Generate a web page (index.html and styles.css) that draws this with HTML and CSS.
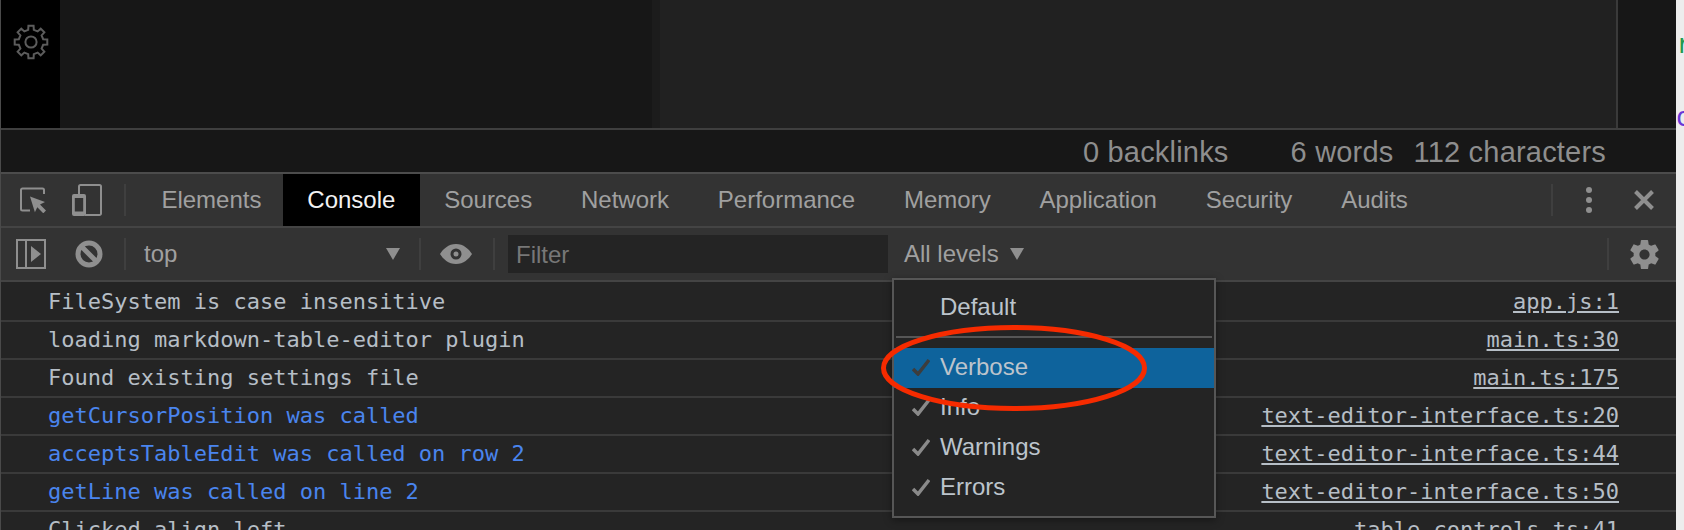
FILE: index.html
```html
<!DOCTYPE html>
<html lang="en">
<head>
<meta charset="utf-8">
<title>DevTools console</title>
<link rel="stylesheet" href="styles.css">
</head>
<body>
<div class="page">
  <main class="app">
    <section class="workspace">
      <aside class="ribbon">
        <svg class="ribbon-gear" viewBox="-18 -18 36 36" aria-hidden="true">
          <polygon points="12.18,-2.81 16.3,-2.58 16.3,2.58 12.18,2.81 10.6,6.63 13.35,9.7 9.7,13.35 6.63,10.6 2.81,12.18 2.58,16.3 -2.58,16.3 -2.81,12.18 -6.63,10.6 -9.7,13.35 -13.35,9.7 -10.6,6.63 -12.18,2.81 -16.3,2.58 -16.3,-2.58 -12.18,-2.81 -10.6,-6.63 -13.35,-9.7 -9.7,-13.35 -6.63,-10.6 -2.81,-12.18 -2.58,-16.3 2.58,-16.3 2.81,-12.18 6.63,-10.6 9.7,-13.35 13.35,-9.7 10.6,-6.63"/>
          <circle r="5.6"/>
        </svg>
      </aside>
      <div class="side-pane"></div>
      <div class="pane-split"></div>
      <div class="editor-pane"></div>
      <div class="right-pane"></div>
    </section>

    <footer class="statusbar">
      <span class="stat-links">0 backlinks</span>
      <span class="stat-words">6 words</span>
      <span>112 characters</span>
    </footer>

    <nav class="tabbar">
      <svg class="ic-inspect" viewBox="0 0 26 26" aria-hidden="true">
        <path class="line" d="M10 23.5H2.5a1.5 1.5 0 0 1-1.5-1.5V3a1.5 1.5 0 0 1 1.5-1.5h20A1.5 1.5 0 0 1 24 3v4"/>
        <path class="solid" d="M10 9.5l15 5.5-5 2.6 6 6-2.7 2.7-6-6-2.4 5z"/>
      </svg>
      <svg class="ic-device" viewBox="0 0 30 32" aria-hidden="true">
        <path class="line" d="M7 10V2.5A1.5 1.5 0 0 1 8.500 1h19A1.500 1.500 0 0 1 29 2.500v27a1.500 1.500 0 0 1-1.500 1.500H13"/>
        <path class="solid" d="M2 10h10a2 2 0 0 1 2 2v18a2 2 0 0 1-2 2H2a2 2 0 0 1-2-2V12a2 2 0 0 1 2-2zm.8 4v13.500h8.400V14z"/>
      </svg>
      <span class="sep sep-tabs"></span>
      <div class="tabs">
        <span class="tab">Elements</span>
        <span class="tab tab-active">Console</span>
        <span class="tab">Sources</span>
        <span class="tab">Network</span>
        <span class="tab">Performance</span>
        <span class="tab">Memory</span>
        <span class="tab">Application</span>
        <span class="tab">Security</span>
        <span class="tab">Audits</span>
      </div>
      <span class="sep sep-end"></span>
      <svg class="ic-kebab" viewBox="0 0 8 28" aria-hidden="true">
        <circle class="solid" cx="4" cy="4" r="3"/>
        <circle class="solid" cx="4" cy="14" r="3"/>
        <circle class="solid" cx="4" cy="24" r="3"/>
      </svg>
      <svg class="ic-close" viewBox="0 0 20 20" aria-hidden="true">
        <path class="cross" d="M1.500 1.500l17 17M18.500 1.500l-17 17"/>
      </svg>
    </nav>

    <div class="filterbar">
      <svg class="ic-sidebar" viewBox="0 0 30 30" aria-hidden="true">
        <path class="line" d="M1 1h28v28H1zM10 1v28"/>
        <path class="solid" d="M15 7l10 8-10 8z"/>
      </svg>
      <svg class="ic-block" viewBox="0 0 28 28" aria-hidden="true">
        <circle class="thick" cx="14" cy="14" r="11"/>
        <path class="thick" d="M6.500 6.500l15 15"/>
      </svg>
      <span class="sep sep-a"></span>
      <div class="context">
        <span>top</span>
        <span class="tri"></span>
      </div>
      <span class="sep"></span>
      <svg class="ic-eye" viewBox="0 0 32 20" aria-hidden="true">
        <path class="solid" fill-rule="evenodd" d="M16 0c7.500 0 13 5 16 10-3 5-8.500 10-16 10S3 15 0 10C3 5 8.500 0 16 0zm0 4.500a5.500 5.500 0 1 0 0 11 5.500 5.500 0 0 0 0-11zm0 3a2.500 2.500 0 1 1 0 5 2.500 2.500 0 0 1 0-5z"/>
      </svg>
      <span class="sep sep-b"></span>
      <div class="filter">Filter</div>
      <div class="levels">
        <span>All levels</span>
        <span class="tri"></span>
      </div>
      <span class="sep sep-gear"></span>
      <svg class="ic-gear" viewBox="2 2 20 20" aria-hidden="true">
        <path class="solid" d="M19.430 12.980c.04-.32.07-.64.07-.98s-.03-.66-.07-.98l2.110-1.650c.19-.15.24-.42.12-.64l-2-3.460c-.12-.22-.39-.3-.61-.22l-2.490 1c-.52-.4-1.080-.73-1.690-.98l-.38-2.650C14.460 2.180 14.250 2 14 2h-4c-.25 0-.46.18-.49.42l-.38 2.650c-.61.25-1.170.59-1.690.98l-2.490-1c-.23-.09-.49 0-.61.22l-2 3.460c-.13.22-.07.49.12.64l2.110 1.650c-.04.32-.07.65-.07.98s.03.66.07.98l-2.110 1.650c-.19.15-.24.42-.12.64l2 3.460c.12.22.39.3.61.22l2.490-1c.52.4 1.080.73 1.690.98l.38 2.650c.03.24.24.42.49.42h4c.25 0 .46-.18.49-.42l.38-2.650c.61-.25 1.170-.59 1.690-.98l2.490 1c.23.09.49 0 .61-.22l2-3.460c.12-.22.07-.49-.12-.64l-2.110-1.650zM12 15.500c-1.930 0-3.500-1.570-3.500-3.500s1.570-3.500 3.500-3.500 3.500 1.570 3.500 3.500-1.570 3.500-3.500 3.500z"/>
      </svg>
    </div>

    <section class="log">
      <div class="row"><span>FileSystem is case insensitive</span><a class="src">app.js:1</a></div>
      <div class="row"><span>loading markdown-table-editor plugin</span><a class="src">main.ts:30</a></div>
      <div class="row"><span>Found existing settings file</span><a class="src">main.ts:175</a></div>
      <div class="row row-verbose"><span>getCursorPosition was called</span><a class="src">text-editor-interface.ts:20</a></div>
      <div class="row row-verbose"><span>acceptsTableEdit was called on row 2</span><a class="src">text-editor-interface.ts:44</a></div>
      <div class="row row-verbose"><span>getLine was called on line 2</span><a class="src">text-editor-interface.ts:50</a></div>
      <div class="row"><span>Clicked align left</span><a class="src">table-controls.ts:41</a></div>
    </section>

    <div class="menu">
      <div class="item"><span class="check"></span>Default</div>
      <div class="menu-sep"></div>
      <div class="item item-on">
        <svg class="check check-dark" viewBox="0 0 18 18" aria-hidden="true"><path d="M1 11l5 5L17 2"/></svg>Verbose
      </div>
      <div class="item">
        <svg class="check" viewBox="0 0 18 18" aria-hidden="true"><path d="M1 11l5 5L17 2"/></svg>Info
      </div>
      <div class="item">
        <svg class="check" viewBox="0 0 18 18" aria-hidden="true"><path d="M1 11l5 5L17 2"/></svg>Warnings
      </div>
      <div class="item">
        <svg class="check" viewBox="0 0 18 18" aria-hidden="true"><path d="M1 11l5 5L17 2"/></svg>Errors
      </div>
    </div>

    <svg class="annotation" viewBox="0 0 268 88" aria-hidden="true">
      <ellipse cx="134" cy="44" rx="130.500" ry="40.500"/>
    </svg>
  </main>

  <div class="edge">
    <span class="edge-r">r</span>
    <span class="edge-o">o</span>
  </div>
</div>
</body>
</html>
```
FILE: styles.css
```css
* { box-sizing: border-box; }

html, body {
  margin: 0;
  height: 530px;
  overflow: hidden;
  background: #ededed;
  font-family: "Liberation Sans", Arial, sans-serif;
}

.page {
  display: flex;
  width: 1684px;
  height: 530px;
}

.app {
  position: relative;
  width: 1676px;
  height: 530px;
  display: flex;
  flex-direction: column;
  overflow: hidden;
  border-left: 1px solid #4a4a4a;
}

/* upper app */
.workspace {
  display: flex;
  height: 130px;
  border-bottom: 2px solid #3f3f3f;
  background: #171717;
}
.ribbon {
  width: 59px;
  background: #000;
  padding: 24px 0 0 12px;
}
.ribbon-gear { display: block; width: 36px; height: 36px; }
.ribbon-gear polygon,
.ribbon-gear circle { fill: none; stroke: #5c5c5c; stroke-width: 2; }
.side-pane { width: 592px; background: #171717; }
.pane-split { width: 8px; background: #1c1c1c; }
.editor-pane { width: 958px; background: #212121; border-right: 2px solid #3a3a3a; }
.right-pane { flex: 1; background: #171717; }

.statusbar {
  display: flex;
  align-items: center;
  justify-content: flex-end;
  height: 44px;
  padding: 3px 70px 0 0;
  border-bottom: 2px solid #4c4c4c;
  background: #171717;
  color: #8e8e8e;
  font-size: 29px;
  letter-spacing: 0.2px;
}
.stat-links { margin-right: 62px; }
.stat-words { margin-right: 20px; }

/* toolbars */
.tabbar, .filterbar {
  display: flex;
  align-items: center;
  height: 54px;
  background: #333;
  border-bottom: 2px solid #444;
  color: #a0a0a0;
  font-size: 24px;
}
.tabbar { padding-right: 22px; }
.filterbar { padding-right: 17px; }
.tabs { display: flex; align-self: stretch; flex: 1; }
.tab {
  display: flex;
  align-items: center;
  padding: 0 24.400px;
}
.tab:first-child { padding-right: 21.500px; }
.tab-active { background: #000; color: #f2f2f2; }

.sep { display: block; flex: none; width: 2px; height: 32px; background: #3f3f3f; }
.sep-tabs { margin: 0 11px 0 22px; }
.sep-end { margin-right: 32px; }
.sep-a { margin: 0 18px 0 21px; }
.sep-b { margin: 0 13px 0 21px; }
.sep-gear { margin-right: 21px; }

.line { fill: none; stroke: #8f8f8f; stroke-width: 2; }
.solid { fill: #8f8f8f; }
.thick { fill: none; stroke: #8f8f8f; stroke-width: 5; }
.cross { fill: none; stroke: #8f8f8f; stroke-width: 4; }

.ic-inspect { width: 26px; height: 26px; margin-left: 19px; flex: none; }
.ic-device { width: 30px; height: 32px; margin-left: 26px; flex: none; }
.ic-kebab { width: 8px; height: 28px; margin-right: 41px; flex: none; }
.ic-close { width: 20px; height: 20px; flex: none; }
.ic-sidebar { width: 30px; height: 30px; margin-left: 15px; flex: none; }
.ic-block { width: 28px; height: 28px; margin-left: 29px; flex: none; }
.ic-eye { width: 32px; height: 20px; margin-left: 19px; flex: none; }
.ic-gear { width: 29px; height: 29px; flex: none; }

.context {
  display: flex;
  align-items: center;
  justify-content: space-between;
  width: 256px;
  margin-right: 19px;
}
.tri {
  display: block;
  width: 0;
  height: 0;
  border-left: 7px solid transparent;
  border-right: 7px solid transparent;
  border-top: 12px solid #8f8f8f;
}
.filter {
  flex: none;
  width: 380px;
  height: 38px;
  padding: 4px 0 0 8px;
  background: #242424;
  color: #777;
  line-height: 32px;
}
.levels {
  display: flex;
  align-items: center;
  gap: 11px;
  flex: 1;
  margin-left: 16px;
}

/* log */
.log {
  flex: 1;
  overflow: hidden;
  padding-top: 2px;
  background: #242424;
  color: #b6bec6;
  font-family: "DejaVu Sans Mono", monospace;
  font-size: 22px;
}
.row {
  display: flex;
  justify-content: space-between;
  align-items: center;
  height: 38px;
  padding: 0 57px 2px 47px;
  border-bottom: 2px solid #3a3a3a;
  white-space: pre;
}
.row-verbose span { color: #4a85ee; }
.src { color: #b6bec6; text-decoration: underline; }

/* level menu */
.menu {
  position: absolute;
  left: 891px;
  top: 278px;
  width: 324px;
  height: 240px;
  padding: 8px 0 0;
  background: #242424;
  border: 2px solid #565656;
  color: #bcc4cc;
  font-size: 24px;
  box-shadow: 0 2px 8px rgba(0, 0, 0, 0.4);
}
.item {
  display: flex;
  align-items: center;
  height: 40px;
  padding: 0 0 2px 18px;
}
.item-on { background: #0e639c; }
.menu-sep { height: 2px; margin: 8px 2px 10px; background: #565656; }
.check {
  display: block;
  flex: none;
  width: 18px;
  height: 18px;
  margin-right: 10px;
  fill: none;
  stroke: #8a8a8a;
  stroke-width: 3.500;
}
.check-dark { stroke: #3d3d3d; }

.annotation {
  position: absolute;
  left: 879px;
  top: 324px;
  width: 268px;
  height: 88px;
  fill: none;
  stroke: #f62b00;
  stroke-width: 5;
}

/* edge of the page behind the window */
.edge {
  position: relative;
  flex: none;
  width: 8px;
  overflow: hidden;
  font-size: 26px;
  font-family: "DejaVu Sans Mono", monospace;
}
.edge-r { position: absolute; left: 0; top: 29px; color: #1f9a4e; }
.edge-o { position: absolute; left: 0; top: 102px; color: #6a38d8; }
```
